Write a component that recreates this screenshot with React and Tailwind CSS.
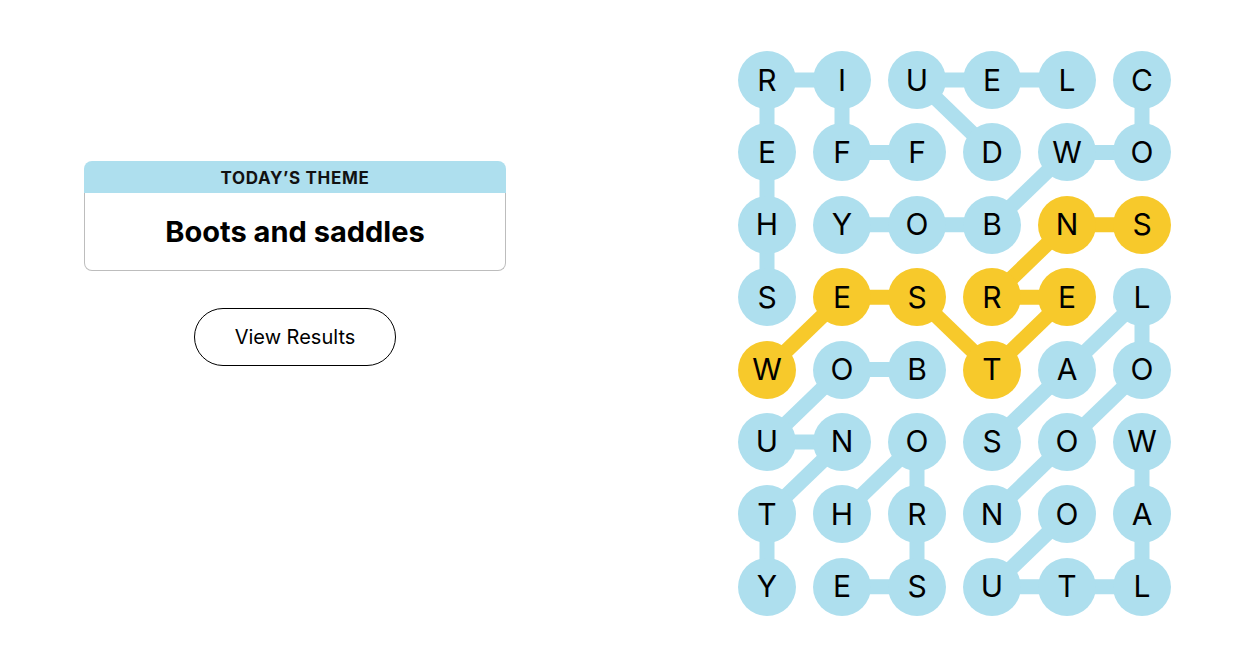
const letters = ['RIUELC', 'EFFDWO', 'HYOBNS', 'SESREL', 'WOBTAO', 'UNOSOW', 'THRNOA', 'YESUTL']

const spangram = ['4-0', '3-1', '3-2', '4-3', '3-4', '3-3', '2-4', '2-5']

const blueLinks = [
  [0, 0, 0, 1], [0, 1, 1, 1], [0, 2, 0, 3], [0, 3, 0, 4], [0, 2, 1, 3], [0, 5, 1, 5],
  [0, 0, 1, 0], [1, 0, 2, 0], [2, 0, 3, 0], [1, 1, 1, 2], [1, 4, 1, 5], [1, 4, 2, 3],
  [2, 1, 2, 2], [2, 2, 2, 3],
  [3, 5, 4, 4], [4, 4, 5, 3], [3, 5, 4, 5], [4, 5, 5, 4], [5, 4, 6, 3],
  [4, 1, 4, 2], [4, 1, 5, 0], [5, 0, 5, 1], [5, 1, 6, 0], [6, 0, 7, 0],
  [5, 2, 6, 1], [5, 2, 6, 2], [6, 2, 7, 2], [7, 1, 7, 2],
  [6, 4, 7, 3], [7, 3, 7, 4], [7, 4, 7, 5], [5, 5, 6, 5], [6, 5, 7, 5],
]

const yellowLinks = [
  [4, 0, 3, 1], [3, 1, 3, 2], [3, 2, 4, 3], [4, 3, 3, 4], [3, 4, 3, 3], [3, 3, 2, 4], [2, 4, 2, 5],
]

const BLUE = '#aedfee'
const YELLOW = '#f7c92b'

const cx = (c) => 29 + c * 75
const cy = (r) => 29 + r * 72.4

const Board = () => (
  <div className="relative">
    {/* connectors */}
    <svg className="absolute inset-0" width="433" height="565" viewBox="0 0 433 565">
      {blueLinks.map(([r1, c1, r2, c2], i) => (
        <line key={`b${i}`} x1={cx(c1)} y1={cy(r1)} x2={cx(c2)} y2={cy(r2)} stroke={BLUE} strokeWidth="15" />
      ))}
      {yellowLinks.map(([r1, c1, r2, c2], i) => (
        <line key={`y${i}`} x1={cx(c1)} y1={cy(r1)} x2={cx(c2)} y2={cy(r2)} stroke={YELLOW} strokeWidth="15" />
      ))}
    </svg>

    <div className="relative grid grid-cols-6 gap-x-[17px] gap-y-[14.4px] w-[433px]">
      {letters.map((row, r) =>
        row.split('').map((ch, c) => (
          <div
            key={`${r}-${c}`}
            className={`w-[58px] h-[58px] rounded-full flex items-center justify-center text-[30px] text-black ${
              spangram.includes(`${r}-${c}`) ? 'bg-[#f7c92b]' : 'bg-[#aedfee]'
            }`}
          >
            {ch}
          </div>
        ))
      )}
    </div>
  </div>
)

export default function App() {
  return (
    <div className="min-h-screen bg-white flex font-['Inter',sans-serif]">
      {/* Theme + results */}
      <div className="w-[506px] pl-[84px] pt-[161px] flex flex-col items-center">
        <div className="w-[422px] h-[110px] flex flex-col">
          <div className="h-[32px] pt-[3px] rounded-t-lg bg-[#aedfee] flex items-center justify-center text-[17px] font-bold tracking-[0.04em] text-[#121212] uppercase">
            Today’s Theme
          </div>
          <div className="flex-1 rounded-b-lg border-x border-b border-[#bdbdbd] flex items-center justify-center text-[29px] font-bold text-black">
            Boots and saddles
          </div>
        </div>

        <button className="mt-[37px] w-[202px] h-[58px] rounded-full border border-black bg-white text-[20px] text-black">
          View Results
        </button>
      </div>

      {/* Board */}
      <div className="ml-[232px] pt-[51px]">
        <Board />
      </div>
    </div>
  )
}
